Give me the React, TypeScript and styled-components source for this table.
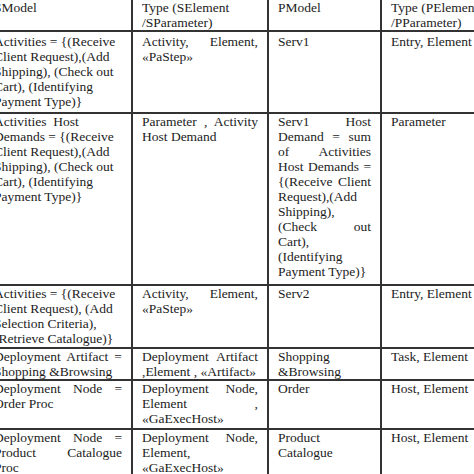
import React from 'react';
import styled, { createGlobalStyle } from 'styled-components';

const GlobalStyle = createGlobalStyle`
  html, body {
    margin: 0;
    padding: 0;
    background: #ffffff;
    overflow: hidden;
  }
  body {
    font-family: "Liberation Serif", "Times New Roman", serif;
    color: #1c1c1c;
  }
`;

const Table = styled.table`
  table-layout: fixed;
  border-collapse: collapse;
  width: 530px;
  margin: -2px 0 0 -17px;
  font-size: 13.5px;
  line-height: 15px;
`;

const Col = styled.col<{ w: number }>`
  width: ${({ w }) => w}px;
`;

// rows in the source table are not evenly padded, so each row carries its own
const Row = styled.tr<{ padTop?: number; padBottom?: number }>`
  & > td,
  & > th {
    padding-top: ${({ padTop }) => padTop ?? 0}px;
    padding-bottom: ${({ padBottom }) => padBottom ?? 0}px;
  }
`;

const HeadCell = styled.th`
  border: 2px solid #333;
  padding-left: 9px;
  padding-right: 9px;
  text-align: left;
  vertical-align: top;
  font-weight: normal;
`;

const Cell = styled.td<{ justify?: boolean }>`
  border: 2px solid #333;
  padding-left: 9px;
  padding-right: 9px;
  vertical-align: top;
  text-align: ${({ justify }) => (justify ? 'justify' : 'left')};
  text-align-last: left;
`;

type Entry = {
  smodel: string;
  smodelJustify?: boolean;
  stype: string;
  pmodel: string;
  ptype: string;
  padTop: number;
  padBottom: number;
};

const rows: Entry[] = [
  {
    smodel: 'Activities = {(Receive Client Request),(Add Shipping), (Check out Cart), (Identifying Payment Type)}',
    stype: 'Activity, Element, «PaStep»',
    pmodel: 'Serv1',
    ptype: 'Entry, Element',
    padTop: 2,
    padBottom: 3,
  },
  {
    smodel: 'Activities\u00a0 Host Demands = {(Receive Client Request),(Add Shipping), (Check out Cart), (Identifying Payment Type)}',
    stype: 'Parameter , Activity Host Demand',
    pmodel: 'Serv1 Host Demand = sum of Activities Host Demands = {(Receive Client Request),(Add Shipping), (Check out Cart), (Identifying Payment Type)}',
    ptype: 'Parameter',
    padTop: 0,
    padBottom: 5,
  },
  {
    smodel: 'Activities = {(Receive Client Request), (Add Selection Criteria), (Retrieve Catalogue)}',
    stype: 'Activity, Element, «PaStep»',
    pmodel: 'Serv2',
    ptype: 'Entry, Element',
    padTop: 0,
    padBottom: 1,
  },
  {
    smodel: 'Deployment Artifact = Shopping &Browsing',
    smodelJustify: true,
    stype: 'Deployment Artifact ,Element , «Artifact»',
    pmodel: 'Shopping &Browsing',
    ptype: 'Task, Element',
    padTop: 0,
    padBottom: 0,
  },
  {
    smodel: 'Deployment Node = Order Proc',
    smodelJustify: true,
    stype: 'Deployment Node, Element , «GaExecHost»',
    pmodel: 'Order',
    ptype: 'Host, Element',
    padTop: 0,
    padBottom: 2,
  },
  {
    smodel: 'Deployment Node = Product Catalogue Proc',
    smodelJustify: true,
    stype: 'Deployment Node, Element, «GaExecHost»',
    pmodel: 'Product Catalogue',
    ptype: 'Host, Element',
    padTop: 0,
    padBottom: 2,
  },
];

export default function App() {
  return (
    <>
      <GlobalStyle />
      <Table>
        <colgroup>
          <Col w={148} />
          <Col w={136} />
          <Col w={113} />
          <Col w={133} />
        </colgroup>
        <thead>
          <Row padTop={0} padBottom={0}>
            <HeadCell>SModel</HeadCell>
            <HeadCell>Type (SElement /SParameter)</HeadCell>
            <HeadCell>PModel</HeadCell>
            <HeadCell>Type (PElement /PParameter)</HeadCell>
          </Row>
        </thead>
        <tbody>
          {rows.map((r, i) => (
            <Row key={i} padTop={r.padTop} padBottom={r.padBottom}>
              <Cell justify={r.smodelJustify}>{r.smodel}</Cell>
              <Cell justify>{r.stype}</Cell>
              <Cell justify>{r.pmodel}</Cell>
              <Cell>{r.ptype}</Cell>
            </Row>
          ))}
        </tbody>
      </Table>
    </>
  );
}
